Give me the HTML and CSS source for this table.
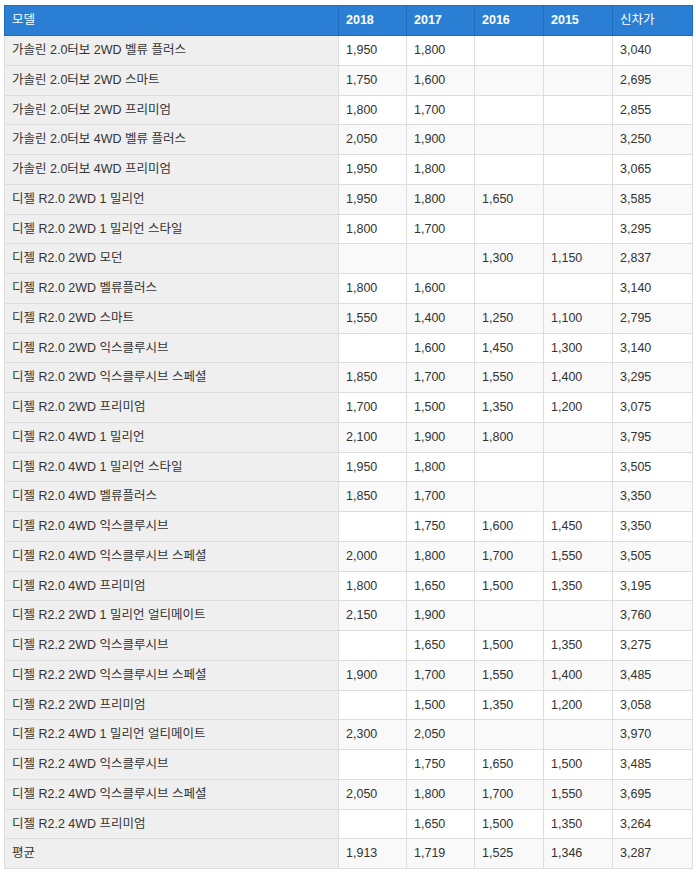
FILE: index.html
```html
<!DOCTYPE html>
<html lang="ko">
<head>
<meta charset="utf-8">
<title>중고차 시세</title>
<link rel="stylesheet" href="styles.css">
</head>
<body>
<div class="wrap">
<table class="price">
<colgroup>
<col class="c-model"><col class="c-y"><col class="c-y"><col class="c-y2"><col class="c-y2"><col class="c-new">
</colgroup>
<thead>
<tr><th class="kr">모델</th><th>2018</th><th>2017</th><th>2016</th><th>2015</th><th class="kr">신차가</th></tr>
</thead>
<tbody>
<tr><td>가솔린 2.0터보 2WD 벨류 플러스</td><td>1,950</td><td>1,800</td><td></td><td></td><td>3,040</td></tr>
<tr><td>가솔린 2.0터보 2WD 스마트</td><td>1,750</td><td>1,600</td><td></td><td></td><td>2,695</td></tr>
<tr><td>가솔린 2.0터보 2WD 프리미엄</td><td>1,800</td><td>1,700</td><td></td><td></td><td>2,855</td></tr>
<tr><td>가솔린 2.0터보 4WD 벨류 플러스</td><td>2,050</td><td>1,900</td><td></td><td></td><td>3,250</td></tr>
<tr><td>가솔린 2.0터보 4WD 프리미엄</td><td>1,950</td><td>1,800</td><td></td><td></td><td>3,065</td></tr>
<tr><td>디젤 R2.0 2WD 1 밀리언</td><td>1,950</td><td>1,800</td><td>1,650</td><td></td><td>3,585</td></tr>
<tr><td>디젤 R2.0 2WD 1 밀리언 스타일</td><td>1,800</td><td>1,700</td><td></td><td></td><td>3,295</td></tr>
<tr><td>디젤 R2.0 2WD 모던</td><td></td><td></td><td>1,300</td><td>1,150</td><td>2,837</td></tr>
<tr><td>디젤 R2.0 2WD 벨류플러스</td><td>1,800</td><td>1,600</td><td></td><td></td><td>3,140</td></tr>
<tr><td>디젤 R2.0 2WD 스마트</td><td>1,550</td><td>1,400</td><td>1,250</td><td>1,100</td><td>2,795</td></tr>
<tr><td>디젤 R2.0 2WD 익스클루시브</td><td></td><td>1,600</td><td>1,450</td><td>1,300</td><td>3,140</td></tr>
<tr><td>디젤 R2.0 2WD 익스클루시브 스페셜</td><td>1,850</td><td>1,700</td><td>1,550</td><td>1,400</td><td>3,295</td></tr>
<tr><td>디젤 R2.0 2WD 프리미엄</td><td>1,700</td><td>1,500</td><td>1,350</td><td>1,200</td><td>3,075</td></tr>
<tr><td>디젤 R2.0 4WD 1 밀리언</td><td>2,100</td><td>1,900</td><td>1,800</td><td></td><td>3,795</td></tr>
<tr><td>디젤 R2.0 4WD 1 밀리언 스타일</td><td>1,950</td><td>1,800</td><td></td><td></td><td>3,505</td></tr>
<tr><td>디젤 R2.0 4WD 벨류플러스</td><td>1,850</td><td>1,700</td><td></td><td></td><td>3,350</td></tr>
<tr><td>디젤 R2.0 4WD 익스클루시브</td><td></td><td>1,750</td><td>1,600</td><td>1,450</td><td>3,350</td></tr>
<tr><td>디젤 R2.0 4WD 익스클루시브 스페셜</td><td>2,000</td><td>1,800</td><td>1,700</td><td>1,550</td><td>3,505</td></tr>
<tr><td>디젤 R2.0 4WD 프리미엄</td><td>1,800</td><td>1,650</td><td>1,500</td><td>1,350</td><td>3,195</td></tr>
<tr><td>디젤 R2.2 2WD 1 밀리언 얼티메이트</td><td>2,150</td><td>1,900</td><td></td><td></td><td>3,760</td></tr>
<tr><td>디젤 R2.2 2WD 익스클루시브</td><td></td><td>1,650</td><td>1,500</td><td>1,350</td><td>3,275</td></tr>
<tr><td>디젤 R2.2 2WD 익스클루시브 스페셜</td><td>1,900</td><td>1,700</td><td>1,550</td><td>1,400</td><td>3,485</td></tr>
<tr><td>디젤 R2.2 2WD 프리미엄</td><td></td><td>1,500</td><td>1,350</td><td>1,200</td><td>3,058</td></tr>
<tr><td>디젤 R2.2 4WD 1 밀리언 얼티메이트</td><td>2,300</td><td>2,050</td><td></td><td></td><td>3,970</td></tr>
<tr><td>디젤 R2.2 4WD 익스클루시브</td><td></td><td>1,750</td><td>1,650</td><td>1,500</td><td>3,485</td></tr>
<tr><td>디젤 R2.2 4WD 익스클루시브 스페셜</td><td>2,050</td><td>1,800</td><td>1,700</td><td>1,550</td><td>3,695</td></tr>
<tr><td>디젤 R2.2 4WD 프리미엄</td><td></td><td>1,650</td><td>1,500</td><td>1,350</td><td>3,264</td></tr>
<tr><td>평균</td><td>1,913</td><td>1,719</td><td>1,525</td><td>1,346</td><td>3,287</td></tr>
</tbody>
</table>
</div>
</body>
</html>
```

FILE: styles.css
```css
html, body {
  margin: 0;
  padding: 0;
  background: #ffffff;
}

.wrap {
  padding: 5px 4px;
}

.price {
  width: 688px;
  table-layout: fixed;
  border-collapse: collapse;
  font-family: "Liberation Sans", "Noto Sans CJK KR", sans-serif;
  font-size: 12.5px;
  color: #333333;
}

.c-model { width: 334px; }
.c-y { width: 68px; }
.c-y2 { width: 69px; }
.c-new { width: 80px; }

.price th {
  background: #2a7fd4;
  color: #ffffff;
  font-weight: bold;
  text-align: left;
  border: 1px solid #1c6cbf;
  padding: 5px 7px;
  line-height: 19px;
  height: 19px;
}

.price th.kr {
  font-weight: normal;
}

.price td {
  border: 1px solid #dddddd;
  padding: 5px 7px;
  line-height: 18.75px;
  white-space: nowrap;
}

.price tbody tr:nth-child(even) td {
  background: #f9f9f9;
}

.price tbody td:first-child,
.price tbody tr:nth-child(even) td:first-child {
  background: #efefef;
}
```
